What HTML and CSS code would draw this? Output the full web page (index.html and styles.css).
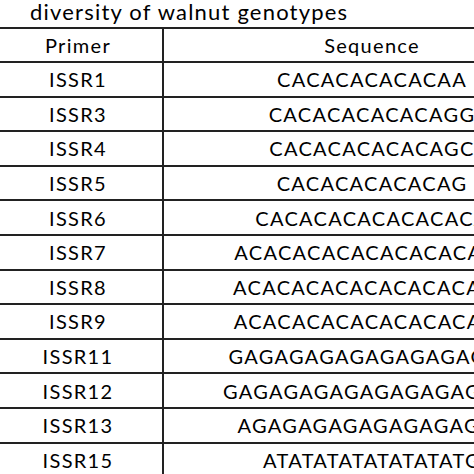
FILE: index.html
```html
<!DOCTYPE html>
<html>
<head>
<meta charset="utf-8">
<link rel="stylesheet" href="styles.css">
</head>
<body>
<div class="page">
  <div class="caption">diversity of walnut genotypes</div>
  <div class="table">
    <div class="row head"><div class="c1">Primer</div><div class="c2">Sequence</div></div>
    <div class="row"><div class="c1">ISSR1</div><div class="c2">CACACACACACAA</div></div>
    <div class="row"><div class="c1">ISSR3</div><div class="c2">CACACACACACAGG</div></div>
    <div class="row"><div class="c1">ISSR4</div><div class="c2">CACACACACACAGC</div></div>
    <div class="row"><div class="c1">ISSR5</div><div class="c2">CACACACACACAG</div></div>
    <div class="row"><div class="c1">ISSR6</div><div class="c2">CACACACACACACACA</div></div>
    <div class="row"><div class="c1">ISSR7</div><div class="c2">ACACACACACACACACACT</div></div>
    <div class="row"><div class="c1">ISSR8</div><div class="c2">ACACACACACACACACACG</div></div>
    <div class="row"><div class="c1">ISSR9</div><div class="c2">ACACACACACACACACACC</div></div>
    <div class="row"><div class="c1">ISSR11</div><div class="c2">GAGAGAGAGAGAGAGAGAC</div></div>
    <div class="row"><div class="c1">ISSR12</div><div class="c2">GAGAGAGAGAGAGAGAGAYT</div></div>
    <div class="row"><div class="c1">ISSR13</div><div class="c2">AGAGAGAGAGAGAGAGYT</div></div>
    <div class="row"><div class="c1">ISSR15</div><div class="c2">ATATATATATATATATG</div></div>
  </div>
</div>
</body>
</html>
```
FILE: styles.css
```css
html, body {
  margin: 0;
  padding: 0;
  background: #ffffff;
}
.page {
  width: 474px;
  height: 474px;
  overflow: hidden;
  font-family: Lato, "Open Sans", sans-serif;
  color: #000;
}
.caption {
  height: 27px;
  padding-left: 30px;
  font-size: 22px;
  letter-spacing: 1.2px;
  line-height: 24px;
  box-sizing: border-box;
}
.table {
  margin-left: -6px;
  width: 586px;
  border-top: 2px solid #222;
}
.row {
  display: grid;
  grid-template-columns: 170px 1fr;
  height: 34.6px;
  border-bottom: 2px solid #222;
  box-sizing: border-box;
  font-size: 20px;
  letter-spacing: 1.3px;
}
.row.head {
  height: 34px;
}
.c1, .c2 {
  display: flex;
  align-items: center;
  justify-content: center;
  white-space: nowrap;
}
.c1 {
  border-right: 2px solid #222;
}
```
